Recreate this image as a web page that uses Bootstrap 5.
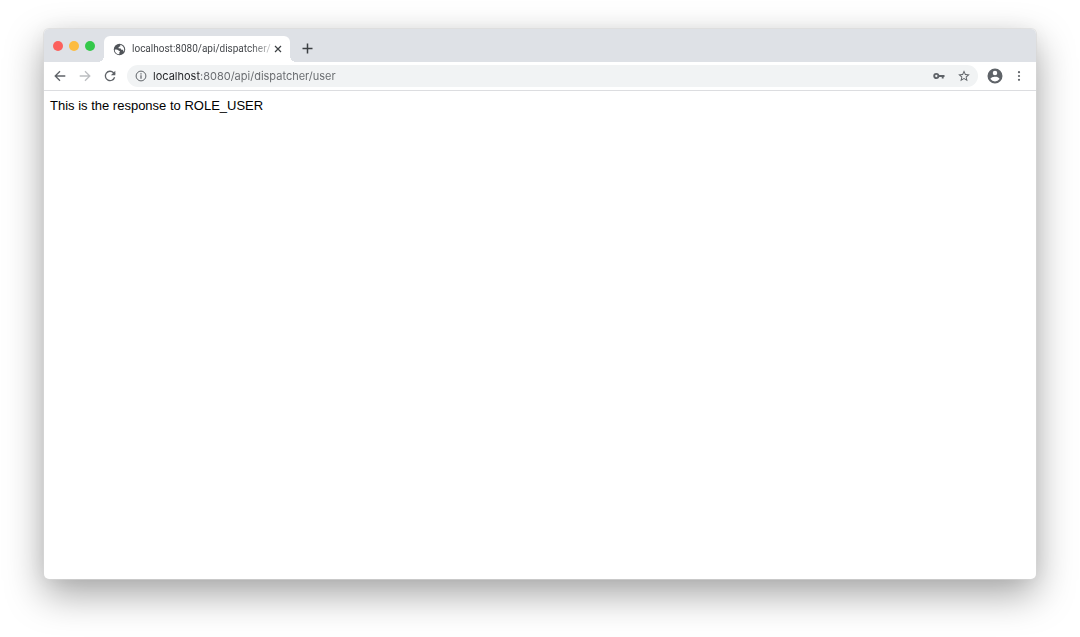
<!DOCTYPE html>
<html lang="en">
<head>
<meta charset="utf-8">
<meta name="viewport" content="width=device-width, initial-scale=1">
<title>localhost:8080/api/dispatcher/user</title>
<link href="https://cdn.jsdelivr.net/npm/bootstrap@5.3.0/dist/css/bootstrap.min.css" rel="stylesheet">
<style>
  body { padding: 29px 44px 58px; background: #fff; font-family: Roboto, "Liberation Sans", sans-serif; }
  .browser { border-radius: 5px; background: #fff; box-shadow: 0 0 0 1px rgba(215,215,215,.6), 0 15px 38px rgba(0,0,0,.36), 0 0 20px rgba(0,0,0,.04); }
  .browser button { border: 0; padding: 0; background: none; color: #5f6368; display: flex; align-items: center; justify-content: center; flex: none; }
  .browser svg { display: block; flex: none; }
  .tab-strip { height: 33px; background: #dee1e6; border-radius: 5px 5px 0 0; padding-left: 9px; }
  .lights { gap: 6px; padding-top: 1px; margin-right: 9px; }
  .browser .light { width: 10px; height: 10px; border-radius: 50%; }
  .browser .light-close { background: #fc605c; }
  .browser .light-min { background: #fdbc40; }
  .browser .light-max { background: #34c84a; }
  .page-tab { width: 186px; height: 26px; background: #fff; border-radius: 6px 6px 0 0; padding: 0 6px 0 9px; }
  .page-tab::before, .page-tab::after { content: ""; position: absolute; bottom: 0; width: 6px; height: 6px; }
  .page-tab::before { right: 100%; background: radial-gradient(circle at 0 0, transparent 6px, #fff 6px); }
  .page-tab::after { left: 100%; background: radial-gradient(circle at 100% 0, transparent 6px, #fff 6px); }
  .tab-title { flex: 1; margin-left: 6px; font: 10px/14px Roboto, sans-serif; color: #45484c; white-space: nowrap; -webkit-mask-image: linear-gradient(90deg, #000 118px, rgba(0,0,0,.3) 138px); mask-image: linear-gradient(90deg, #000 118px, rgba(0,0,0,.3) 138px); }
  .browser .tab-x { width: 12px; height: 12px; }
  .browser .new-tab { width: 16px; height: 16px; margin: 6px 0 0 9px; }
  .toolbar { height: 29px; border-bottom: 1px solid #dcdde0; padding: 0 10px 0 9px; }
  .nav-icons { gap: 11px; margin-right: 10px; }
  .address { height: 22px; border-radius: 11px; background: #f1f3f4; padding: 0 7px 0 8px; }
  .address input { border: 0; outline: 0; padding: 0; margin-left: 6px; min-width: 0; font: 11px/16px Inter, sans-serif; color: transparent; background: linear-gradient(90deg, #202124 47px, #64676b 47px); -webkit-background-clip: text; background-clip: text; }
  .page-text { font: 13px/18px "Liberation Sans", sans-serif; color: #000; padding: 6px; }
</style>
</head>
<body class="min-vh-100 d-flex flex-column">
<div class="browser flex-grow-1 d-flex flex-column">
  <header>
    <div class="tab-strip d-flex align-items-end">
      <div class="lights d-flex align-items-center align-self-center">
        <button class="light light-close" aria-label="Close window"></button>
        <button class="light light-min" aria-label="Minimize window"></button>
        <button class="light light-max" aria-label="Zoom window"></button>
      </div>
      <div class="page-tab position-relative d-flex align-items-center">
        <svg width="13" height="13" viewBox="0 0 13 13"><circle cx="6.500" cy="6.500" r="5.700" fill="#505459"/><path fill="#fff" d="M1.700 6.700C3.300 6 4.600 6.600 5.600 7.600L7.100 8.500 6.300 9.600 6.400 11.200C3.600 11.200 1.700 9.200 1.700 6.700zM7.200 1.800L7.400 3.200 5.700 4 5.500 5.300 7.700 5.600 8.300 6.700 10.100 6.800 10.400 8.700 11.200 7.400C11.500 4.700 9.800 2.400 7.200 1.800z"/></svg>
        <span class="tab-title">localhost:8080/api/dispatcher/</span>
        <button class="tab-x" aria-label="Close tab"><svg width="8" height="8" viewBox="0 0 8 8" stroke="#3c4043" stroke-width="1.200"><path d="M1 1l6 6M7 1L1 7"/></svg></button>
      </div>
      <button class="new-tab align-self-center" aria-label="New tab"><svg width="11" height="11" viewBox="0 0 11 11" stroke="#3c4043" stroke-width="1.500"><path d="M5.500 .5v10M.5 5.500h10"/></svg></button>
    </div>
    <div class="toolbar d-flex align-items-center">
      <nav class="nav-icons d-flex">
        <button aria-label="Back"><svg width="14" height="14" viewBox="0 0 14 14" fill="none" stroke="#5f6368" stroke-width="1.300"><path d="M12.300 7H2.500M7 2.200L2.200 7 7 11.800"/></svg></button>
        <button aria-label="Forward"><svg width="14" height="14" viewBox="0 0 14 14" fill="none" stroke="#bcbec1" stroke-width="1.300"><path d="M1.700 7h9.800M7 2.200L11.800 7 7 11.800"/></svg></button>
        <button aria-label="Reload"><svg width="14" height="14" viewBox="0 0 14 14" fill="none" stroke="#5f6368" stroke-width="1.300"><path d="M11.600 8.300A4.700 4.700 0 1110.500 3.700L12 5.200"/><path d="M12.300 1.800v4.400H7.900z" fill="#5f6368" stroke="none"/></svg></button>
      </nav>
      <form class="address d-flex align-items-center flex-grow-1" onsubmit="return false">
        <svg width="12" height="12" viewBox="0 0 12 12" fill="none" stroke="#5f6368"><circle cx="6" cy="6" r="4.900"/><path d="M6 5.300v3.400M6 3.200v1.200" stroke-width="1.200"/></svg>
        <input class="flex-grow-1" type="text" aria-label="Address" value="localhost:8080/api/dispatcher/user" spellcheck="false">
        <button type="button" aria-label="Saved passwords"><svg width="12" height="12" viewBox="0 0 12 12" fill="none" stroke="#5f6368" stroke-width="1.900"><circle cx="3.300" cy="6" r="2.100"/><path d="M5.500 6h6M9.700 6v2.600"/></svg></button>
        <button type="button" class="ms-2 ps-1" aria-label="Bookmark this page"><svg width="14" height="14" viewBox="0 0 24 24" fill="#5f6368"><path d="M22 9.240l-7.190-.62L12 2 9.190 8.630 2 9.240l5.460 4.730L5.820 21 12 17.270 18.180 21l-1.630-7.030L22 9.240zM12 15.400l-3.760 2.270 1-4.280-3.320-2.880 4.380-.38L12 6.100l1.710 4.040 4.380.38-3.320 2.880 1 4.280L12 15.400z"/></svg></button>
      </form>
      <button class="ms-2" aria-label="Profile"><svg width="18" height="18" viewBox="0 0 24 24" fill="#5f6368"><path d="M12 2a10 10 0 100 20 10 10 0 000-20zm0 3a3 3 0 110 6 3 3 0 010-6zm0 14.200a7.200 7.200 0 01-6-3.220c.03-1.990 4-3.080 6-3.080s5.970 1.090 6 3.080a7.200 7.200 0 01-6 3.220z"/></svg></button>
      <button class="ms-2" aria-label="Menu"><svg width="14" height="14" viewBox="0 0 14 14" fill="#5f6368"><circle cx="7" cy="3.200" r="1.100"/><circle cx="7" cy="7" r="1.100"/><circle cx="7" cy="10.800" r="1.100"/></svg></button>
    </div>
  </header>
  <main class="page-text">This is the response to ROLE_USER</main>
</div>
<script src="https://cdn.jsdelivr.net/npm/bootstrap@5.3.0/dist/js/bootstrap.bundle.min.js"></script>
</body>
</html>
